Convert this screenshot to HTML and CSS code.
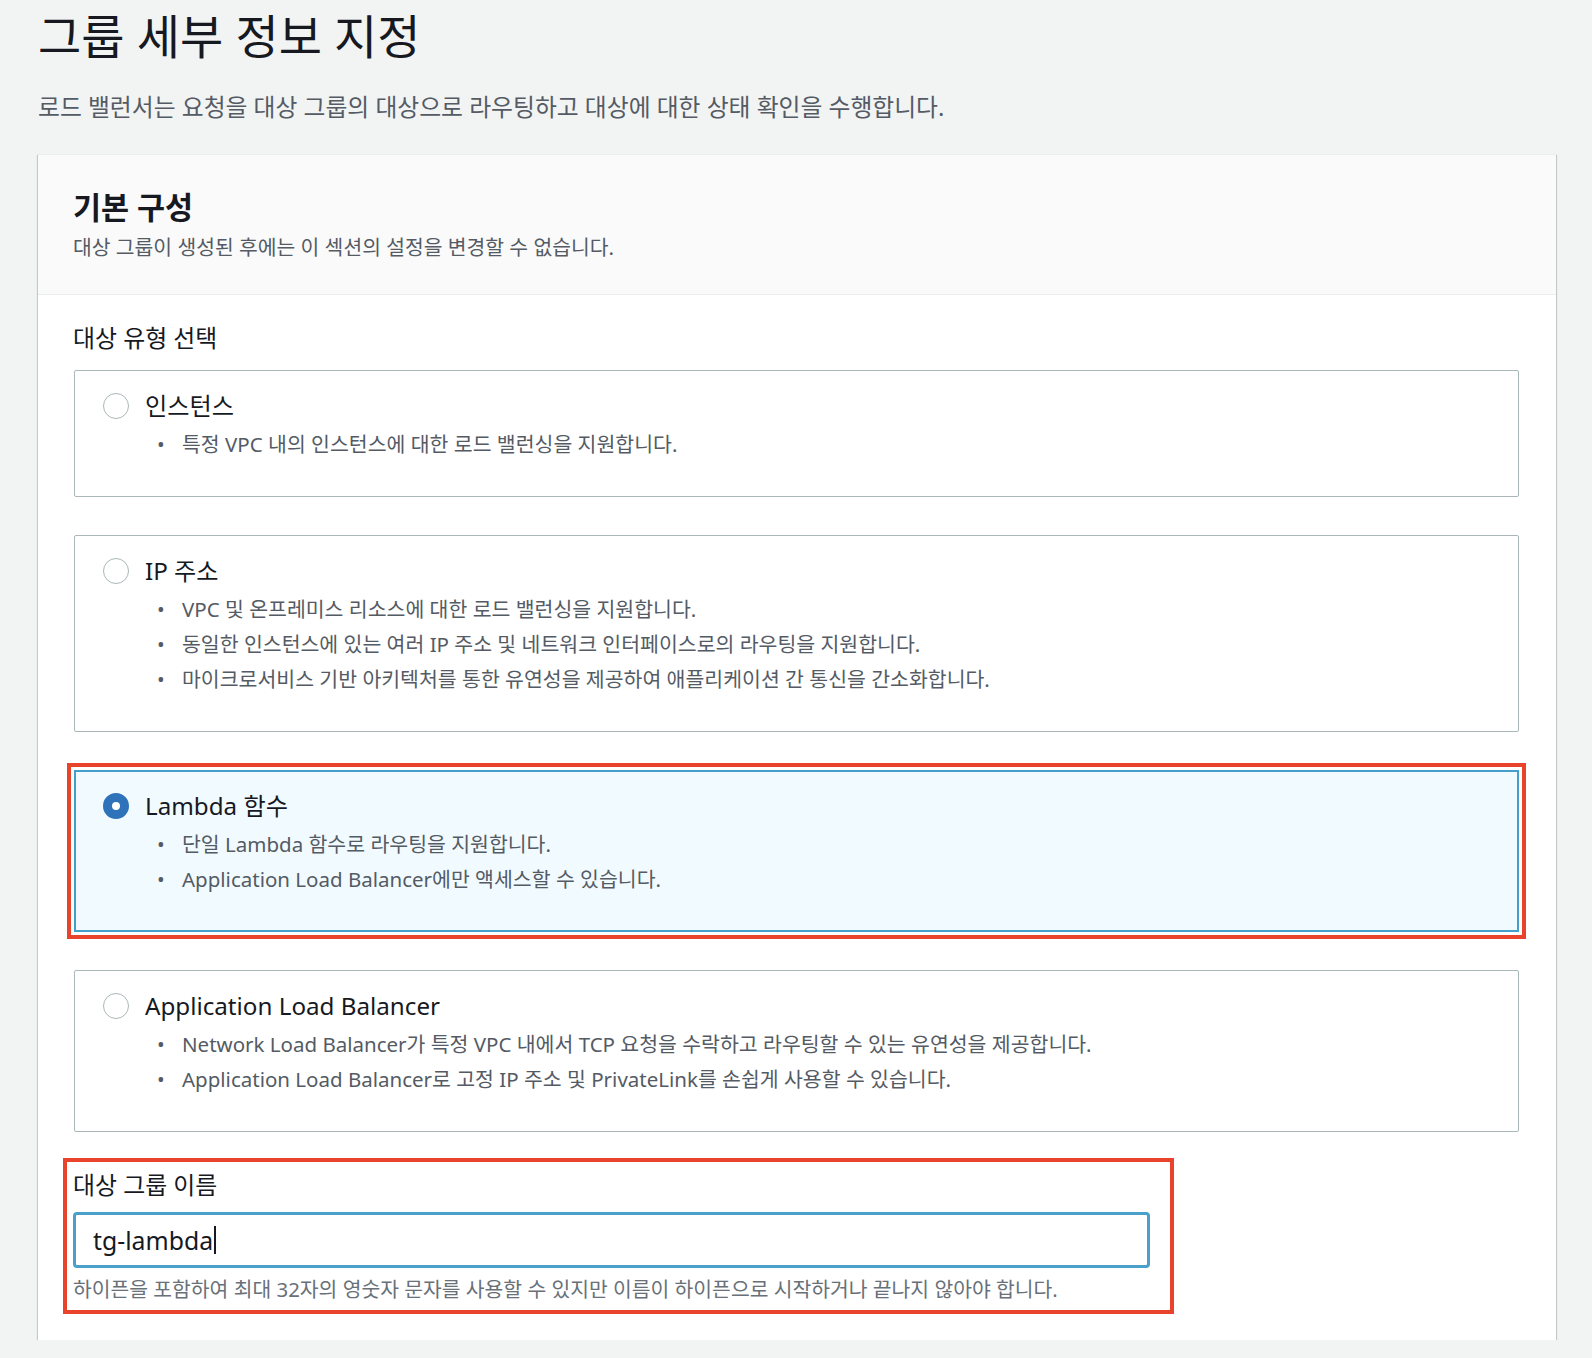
FILE: index.html
```html
<!DOCTYPE html>
<html lang="ko">
<head>
    <meta charset="UTF-8">
    <meta name="viewport" content="width=device-width, initial-scale=1.0">
    <title>그룹 세부 정보 지정</title>
    <link rel="stylesheet" href="styles.css">
</head>
<body>
    <main class="page">
        <h1 class="page-title">그룹 세부 정보 지정</h1>
        <p class="page-desc">로드 밸런서는 요청을 대상 그룹의 대상으로 라우팅하고 대상에 대한 상태 확인을 수행합니다.</p>

        <section class="card">
            <header class="card-header">
                <h2>기본 구성</h2>
                <p>대상 그룹이 생성된 후에는 이 섹션의 설정을 변경할 수 없습니다.</p>
            </header>

            <div class="card-body">
                <div class="field-label">대상 유형 선택</div>

                <div class="tiles">
                    <div class="tile">
                        <span class="radio"></span>
                        <div class="tile-content">
                            <div class="tile-title">인스턴스</div>
                            <ul class="tile-list">
                                <li>특정 VPC 내의 인스턴스에 대한 로드 밸런싱을 지원합니다.</li>
                            </ul>
                        </div>
                    </div>

                    <div class="tile">
                        <span class="radio"></span>
                        <div class="tile-content">
                            <div class="tile-title">IP 주소</div>
                            <ul class="tile-list">
                                <li>VPC 및 온프레미스 리소스에 대한 로드 밸런싱을 지원합니다.</li>
                                <li>동일한 인스턴스에 있는 여러 IP 주소 및 네트워크 인터페이스로의 라우팅을 지원합니다.</li>
                                <li>마이크로서비스 기반 아키텍처를 통한 유연성을 제공하여 애플리케이션 간 통신을 간소화합니다.</li>
                            </ul>
                        </div>
                    </div>

                    <div class="tile selected">
                        <span class="radio"></span>
                        <div class="tile-content">
                            <div class="tile-title">Lambda 함수</div>
                            <ul class="tile-list">
                                <li>단일 Lambda 함수로 라우팅을 지원합니다.</li>
                                <li>Application Load Balancer에만 액세스할 수 있습니다.</li>
                            </ul>
                        </div>
                    </div>

                    <div class="tile">
                        <span class="radio"></span>
                        <div class="tile-content">
                            <div class="tile-title">Application Load Balancer</div>
                            <ul class="tile-list">
                                <li>Network Load Balancer가 특정 VPC 내에서 TCP 요청을 수락하고 라우팅할 수 있는 유연성을 제공합니다.</li>
                                <li>Application Load Balancer로 고정 IP 주소 및 PrivateLink를 손쉽게 사용할 수 있습니다.</li>
                            </ul>
                        </div>
                    </div>
                </div>

                <div class="name-field">
                    <div class="field-label">대상 그룹 이름</div>
                    <div class="text-input"><span>tg-lambda</span><span class="caret"></span></div>
                    <p class="hint">하이픈을 포함하여 최대 32자의 영숫자 문자를 사용할 수 있지만 이름이 하이픈으로 시작하거나 끝나지 않아야 합니다.</p>
                </div>
            </div>
        </section>
    </main>
</body>
</html>
```

FILE: styles.css
```css
body {
    margin: 0;
    background-color: #f2f3f3;
    font-family: "Noto Sans", "Noto Sans CJK KR", sans-serif;
    color: #16191f;
}
.page {
    padding: 11px 36px 0 38px;
}
.page-title {
    margin: 0 0 31px 0;
    font-size: 47px;
    line-height: 50px;
    font-weight: 400;
}
.page-desc {
    margin: 0 0 32px 0;
    font-size: 23.8px;
    line-height: 30px;
    color: #545b64;
}
.card {
    background-color: #fff;
    border-top: 1px solid #eaeded;
    box-shadow: 0 1px 1px 0 rgba(0, 28, 36, 0.3), 1px 1px 1px 0 rgba(0, 28, 36, 0.15), -1px 1px 1px 0 rgba(0, 28, 36, 0.15);
}
.card-header {
    background-color: #fafafa;
    border-bottom: 1px solid #eaeded;
    padding: 34px 36px 33px 35px;
}
.card-header h2 {
    margin: 0 0 8px 0;
    font-size: 30.5px;
    line-height: 36px;
    font-weight: 700;
}
.card-header p {
    margin: 0;
    font-size: 20.4px;
    line-height: 28px;
    color: #545b64;
}
.card-body {
    padding: 28px 37px 26px 35px;
}
.field-label {
    font-size: 23.9px;
    line-height: 30px;
    margin-bottom: 17px;
}
.tiles {
    display: flex;
    flex-direction: column;
    gap: 38px;
    margin-left: 1px;
}
.tile {
    display: flex;
    gap: 16px;
    border: 1px solid #aab7b8;
    border-radius: 2px;
    padding: 19px 28px 34px 28px;
}
.tile.selected {
    border: 2px solid #44a0cb;
    border-radius: 0;
    padding: 18px 27px 33px 27px;
    background-color: #f1faff;
    outline: 4px solid #e9442b;
    outline-offset: 3px;
}
.radio {
    flex: 0 0 auto;
    width: 26px;
    height: 26px;
    margin-top: 3px;
    box-sizing: border-box;
    border: 1.5px solid #aab7b8;
    border-radius: 50%;
    background-color: #fff;
}
.selected .radio {
    border: 9px solid #2e72b9;
}
.tile-title {
    font-size: 24.2px;
    line-height: 32px;
}
.tile-list {
    list-style: none;
    margin: 5px 0 0 12px;
    padding: 0;
    font-size: 20.5px;
    line-height: 35px;
    color: #545b64;
}
.tile-list li {
    display: flex;
}
.tile-list li::before {
    content: "•";
    flex: 0 0 25px;
}
.name-field {
    width: 1111px;
    box-sizing: border-box;
    margin: 26px 0 0 -10px;
    border: 4px solid #e9442b;
    padding: 8px 20px 9px 6px;
}
.name-field .field-label {
    margin-bottom: 12px;
}
.text-input {
    display: flex;
    align-items: center;
    height: 56px;
    box-sizing: border-box;
    border: 3px solid #4aa0c8;
    border-radius: 4px;
    padding-left: 17px;
    font-size: 24.8px;
}
.caret {
    width: 2px;
    height: 28px;
    margin-left: 1px;
    background-color: #16191f;
}
.hint {
    margin: 9px 0 0 0;
    font-size: 20.4px;
    line-height: 24px;
    color: #687078;
}
```
